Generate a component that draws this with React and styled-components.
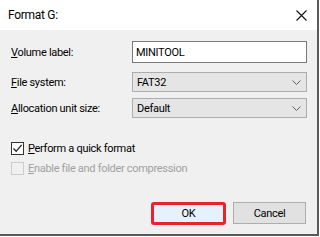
import React from "react";
import styled, { createGlobalStyle } from "styled-components";

const Global = createGlobalStyle`
  html, body { margin: 0; padding: 0; background: #ffffff; }
  body { font-family: Roboto, "Noto Sans", "Liberation Sans", sans-serif; }
  * { box-sizing: border-box; }
`;

const Window = styled.div`
  width: 319px;
  height: 236px;
  display: flex;
  flex-direction: column;
  background: #f0f0f0;
  border-right: 2px solid #5a5a5a;
  border-bottom: 2px solid #5a5a5a;
  font-size: 11px;
  letter-spacing: -0.3px;
  color: #000;
`;

const TitleBar = styled.div`
  height: 30px;
  flex: none;
  background: #ffffff;
  display: flex;
  align-items: center;
  justify-content: space-between;
  padding: 0 10px 0 8px;
`;

const Title = styled.span`
  font-size: 12px;
  letter-spacing: -0.3px;
`;

const Body = styled.div`
  flex: 1;
  display: flex;
  flex-direction: column;
  padding: 11px 10px 0 11px;
`;

const FieldRow = styled.div`
  display: grid;
  grid-template-columns: 121px 175px;
  align-items: center;
  margin-bottom: ${(p) => p.$gap}px;
`;

const Label = styled.label`
  font-size: 11px;
`;

const TextInput = styled.div`
  height: 22px;
  background: #ffffff;
  border: 1px solid #7a7a7a;
  display: flex;
  align-items: center;
  padding-left: 3px;
  font-size: 11px;
`;

const Select = styled.div`
  height: 20px;
  background: #e5e5e5;
  border: 1px solid #adadad;
  display: flex;
  align-items: center;
  justify-content: space-between;
  padding: 0 5px 0 4px;
  font-size: 11px;
`;

const CheckRow = styled.div`
  display: flex;
  align-items: center;
  gap: 4px;
  height: 20px;
  margin-top: ${(p) => p.$top || 0}px;
  color: ${(p) => (p.$disabled ? "#a0a0a0" : "#000")};
  font-size: 11px;
`;

const Box = styled.span`
  width: 13px;
  height: 13px;
  flex: none;
  border: 1px solid ${(p) => (p.$disabled ? "#cccccc" : "#333333")};
  background: ${(p) => (p.$disabled ? "#f0f0f0" : "#ffffff")};
  display: flex;
  align-items: center;
  justify-content: center;
`;

const Buttons = styled.div`
  display: flex;
  justify-content: flex-end;
  gap: 7px;
  margin-top: 24px;
  padding-right: 1px;
`;

const Button = styled.div`
  width: ${(p) => p.$w}px;
  height: ${(p) => p.$h}px;
  display: flex;
  align-items: center;
  justify-content: center;
  background: ${(p) => (p.$primary ? "#e5f1fb" : "#e1e1e1")};
  border: ${(p) => (p.$primary ? "3px solid #e8232a" : "1px solid #adadad")};
  border-radius: ${(p) => (p.$primary ? "3px" : "0")};
  font-size: 11px;
`;

const Chevron = () => (
  <svg width="9" height="5" viewBox="0 0 9 5">
    <path d="M0.5 0.5 L4.5 4.5 L8.5 0.5" fill="none" stroke="#606060" strokeWidth="1" />
  </svg>
);

const Check = () => (
  <svg width="11" height="11" viewBox="0 0 11 11">
    <path d="M1.5 5.5 L4.2 8.3 L9.6 1.8" fill="none" stroke="#222" strokeWidth="1.3" />
  </svg>
);

const Close = () => (
  <svg width="11" height="11" viewBox="0 0 11 11">
    <path d="M0.5 0.5 L10.5 10.5 M10.5 0.5 L0.5 10.5" stroke="#111" strokeWidth="1.1" />
  </svg>
);

export default function App() {
  return (
    <>
      <Global />
      <Window>
        <TitleBar>
          <Title>Format G:</Title>
          <Close />
        </TitleBar>
        <Body>
          <FieldRow $gap={9}>
            <Label><u>V</u>olume label:</Label>
            <TextInput>MINITOOL</TextInput>
          </FieldRow>
          <FieldRow $gap={6}>
            <Label><u>F</u>ile system:</Label>
            <Select>FAT32<Chevron /></Select>
          </FieldRow>
          <FieldRow $gap={0}>
            <Label><u>A</u>llocation unit size:</Label>
            <Select>Default<Chevron /></Select>
          </FieldRow>
          <CheckRow $top={20}>
            <Box><Check /></Box>
            <span><u>P</u>erform a quick format</span>
          </CheckRow>
          <CheckRow $disabled>
            <Box $disabled />
            <span><u>E</u>nable file and folder compression</span>
          </CheckRow>
          <Buttons>
            <Button $primary $w={75} $h={23}>OK</Button>
            <Button $w={73} $h={22}>Cancel</Button>
          </Buttons>
        </Body>
      </Window>
    </>
  );
}
